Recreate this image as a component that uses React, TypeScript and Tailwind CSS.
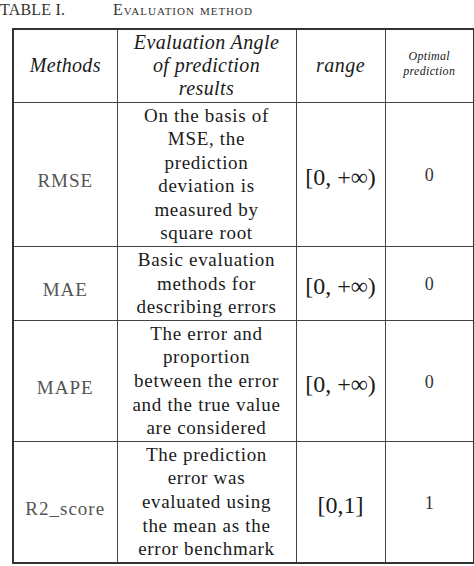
import React from "react";

type Row = {
  method: string;
  desc: string[];
  range: string;
  optimal: string;
};

const rows: Row[] = [
  {
    method: "RMSE",
    desc: ["On the basis of", "MSE, the", "prediction", "deviation is", "measured by", "square root"],
    range: "[0, +∞)",
    optimal: "0",
  },
  {
    method: "MAE",
    desc: ["Basic evaluation", "methods for", "describing errors"],
    range: "[0, +∞)",
    optimal: "0",
  },
  {
    method: "MAPE",
    desc: ["The error and", "proportion", "between the error", "and the true value", "are considered"],
    range: "[0, +∞)",
    optimal: "0",
  },
  {
    method: "R2_score",
    desc: ["The prediction", "error was", "evaluated using", "the mean as the", "error benchmark"],
    range: "[0,1]",
    optimal: "1",
  },
];

export default function App() {
  return (
    <div className="w-[474px] h-[566px] bg-white overflow-hidden text-[#1a1a1a] font-['Liberation_Serif',serif]">
      {/* caption */}
      <div className="flex items-baseline h-[20px] pt-[1px] text-[#333] text-[16px] leading-[18px]">
        <span className="w-[113px] tracking-[0.2px]">TABLE I.</span>
        <span className="[font-variant:small-caps] tracking-[1px]">Evaluation method</span>
      </div>

      <div className="pl-[12px] pt-[8px]">
        <table className="border-collapse border-2 border-[#333] w-[461px] table-fixed text-center font-['Liberation_Serif',serif]">
          <colgroup>
            <col className="w-[104px]" />
            <col className="w-[179px]" />
            <col className="w-[89px]" />
            <col className="w-[89px]" />
          </colgroup>
          <thead>
            <tr className="h-[73px]">
              <th className="border border-[#444] font-normal italic text-[20px] tracking-[0.3px] leading-[23px] p-0">Methods</th>
              <th className="border border-[#444] font-normal italic text-[20px] tracking-[0.4px] leading-[23px] p-0">
                Evaluation Angle
                <br />
                of prediction
                <br />
                results
              </th>
              <th className="border border-[#444] font-normal italic text-[20px] tracking-[0.5px] leading-[23px] p-0">range</th>
              <th className="border border-[#444] font-normal italic text-[12px] tracking-[0.3px] leading-[15px] p-0 pb-[4px]">
                Optimal
                <br />
                prediction
              </th>
            </tr>
          </thead>
          <tbody>
            {rows.map((r) => (
              <tr key={r.method}>
                <td className="border border-[#444] text-[#555] text-[19px] tracking-[1px] leading-[23px] p-0 pt-[13px]">{r.method}</td>
                <td className="border border-[#444] text-[19px] tracking-[0.7px] leading-[23.6px] py-[1px] px-0">
                  {r.desc.map((d, i) => (
                    <div key={i}>{d}</div>
                  ))}
                </td>
                <td className="border border-[#444] text-[24px] leading-[26px] p-0 pt-[6px] whitespace-nowrap">{r.range}</td>
                <td className="border border-[#444] text-[18px] leading-[22px] p-0 pt-[2px] text-[#333]">{r.optimal}</td>
              </tr>
            ))}
          </tbody>
        </table>
      </div>
    </div>
  );
}
